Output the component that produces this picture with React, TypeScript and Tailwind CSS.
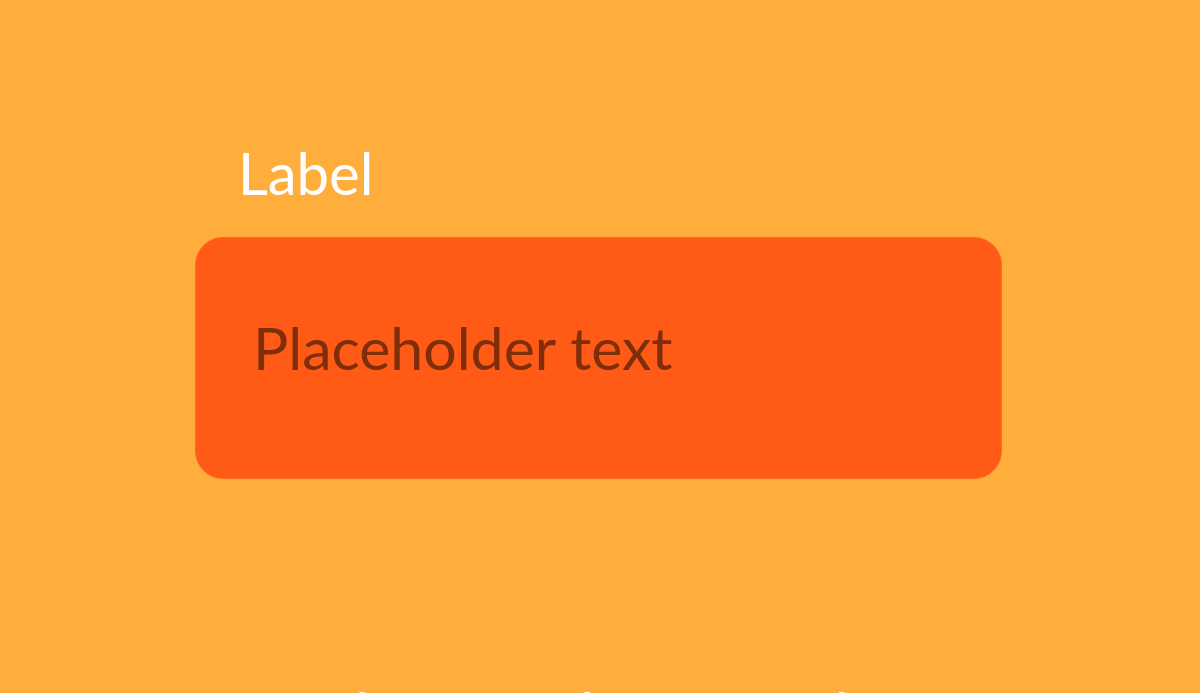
export default function App() {
  return (
    <div
      className="w-[1200px] h-[693px] overflow-hidden bg-[#ffad3b]"
      style={{ fontFamily: "Lato, 'Open Sans', sans-serif" }}
    >
      <div className="pt-[138px] pl-[195px] flex flex-col">
        <label className="ml-[43px] text-[58px] leading-[70px] text-white">Label</label>
        <div className="mt-[29px] w-[807px] h-[242px] rounded-[28px] bg-[#ff5a16] border border-[#ff6a24] flex items-center pl-[57px] pb-[20px]">
          <span className="text-[59px] leading-[70px] text-[#7f2e0b]">Placeholder text</span>
        </div>
        <p className="ml-[160px] mt-[199px] text-[58px] leading-[70px] text-white whitespace-nowrap">
          lower as known or has
        </p>
      </div>
    </div>
  );
}
